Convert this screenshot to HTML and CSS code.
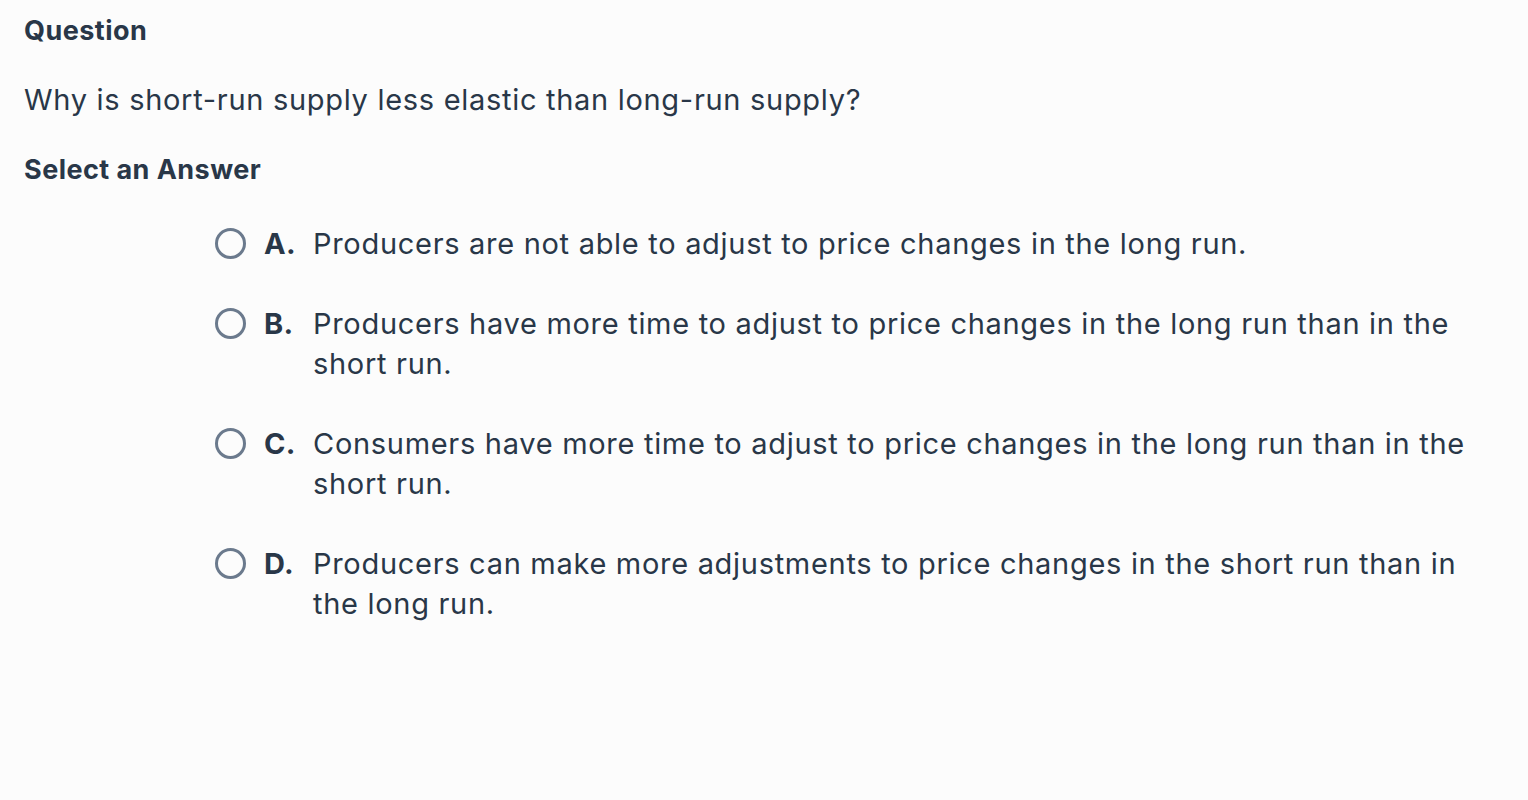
FILE: index.html
```html
<!DOCTYPE html>
<html lang="en">
<head>
<meta charset="utf-8">
<title>Question</title>
<link rel="stylesheet" href="styles.css">
</head>
<body>
<main class="page">
  <h2 class="label">Question</h2>
  <p class="question">Why is short-run supply less elastic than long-run supply?</p>
  <h3 class="label answer-label">Select an Answer</h3>
  <ul class="options">
    <li class="option"><span class="radio"></span><span class="letter">A.</span><span class="text">Producers are not able to adjust to price changes in the long run.</span></li>
    <li class="option"><span class="radio"></span><span class="letter">B.</span><span class="text">Producers have more time to adjust to price changes in the long run than in the short run.</span></li>
    <li class="option"><span class="radio"></span><span class="letter">C.</span><span class="text">Consumers have more time to adjust to price changes in the long run than in the short run.</span></li>
    <li class="option"><span class="radio"></span><span class="letter">D.</span><span class="text">Producers can make more adjustments to price changes in the short run than in the long run.</span></li>
  </ul>
</main>
</body>
</html>
```
FILE: styles.css
```css
html, body {
  margin: 0;
  padding: 0;
  background: #fcfcfc;
}
body {
  font-family: Inter, "Noto Sans", sans-serif;
  color: #293748;
}
.page {
  padding: 13px 24px 0 24px;
}
.label {
  margin: 0;
  font-size: 27px;
  font-weight: 700;
  line-height: 36px;
  letter-spacing: 0.45px;
}
.question {
  margin: 31px 0 0 0;
  font-size: 29px;
  line-height: 40px;
  letter-spacing: 0.7px;
}
.answer-label {
  margin-top: 32px;
}
.options {
  list-style: none;
  margin: 36px 0 0 0;
  padding: 0 0 0 191px;
  display: flex;
  flex-direction: column;
  gap: 40px;
}
.option {
  display: flex;
  align-items: flex-start;
  font-size: 29px;
  line-height: 40px;
  letter-spacing: 0.7px;
}
.radio {
  flex: none;
  box-sizing: border-box;
  width: 31px;
  height: 31px;
  border: 3.5px solid #6b7a8d;
  border-radius: 50%;
  margin-top: 4px;
  margin-right: 18px;
}
.letter {
  flex: none;
  font-weight: 700;
  width: 49px;
  letter-spacing: 0.4px;
}
.text {
  flex: 1;
}
```
